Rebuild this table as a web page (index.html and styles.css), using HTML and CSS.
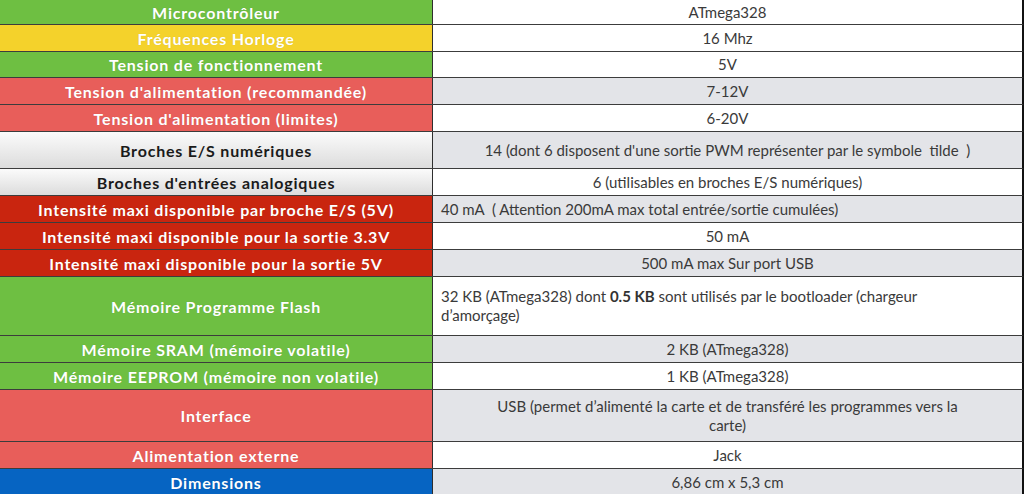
FILE: index.html
```html
<!DOCTYPE html>
<html lang="fr">
<head>
<meta charset="utf-8">
<title>Caractéristiques Arduino Uno</title>
<link rel="stylesheet" href="styles.css">
</head>
<body>
<div class="spec">
  <div class="row h25"><div class="key green"><span>Microcontrôleur</span></div><div class="val"><span>ATmega328</span></div></div>
  <div class="row"><div class="key yellow"><span>Fréquences Horloge</span></div><div class="val"><span>16 Mhz</span></div></div>
  <div class="row h26"><div class="key green"><span>Tension de fonctionnement</span></div><div class="val"><span>5V</span></div></div>
  <div class="row"><div class="key red"><span>Tension d'alimentation (recommandée)</span></div><div class="val alt"><span>7-12V</span></div></div>
  <div class="row"><div class="key red"><span>Tension d'alimentation (limites)</span></div><div class="val"><span>6-20V</span></div></div>
  <div class="row h37"><div class="key light"><span>Broches E/S numériques</span></div><div class="val alt"><span>14 (dont 6 disposent d'une sortie PWM représenter par le symbole&nbsp; tilde&nbsp; )</span></div></div>
  <div class="row"><div class="key light"><span>Broches d'entrées analogiques</span></div><div class="val"><span>6 (utilisables en broches E/S numériques)</span></div></div>
  <div class="row"><div class="key dark"><span>Intensité maxi disponible par broche E/S (5V)</span></div><div class="val alt left"><span>40 mA&nbsp; ( Attention 200mA max total entrée/sortie cumulées)</span></div></div>
  <div class="row"><div class="key dark"><span>Intensité maxi disponible pour la sortie 3.3V</span></div><div class="val"><span>50 mA</span></div></div>
  <div class="row"><div class="key dark"><span>Intensité maxi disponible pour la sortie 5V</span></div><div class="val alt"><span>500 mA max Sur port USB</span></div></div>
  <div class="row h59"><div class="key green"><span>Mémoire Programme Flash</span></div><div class="val left wrap"><p class="para"><span>32 KB (ATmega328) dont </span><b>0.5 KB</b><span> sont utilisés par le bootloader (chargeur</span><br><span>d’amorçage)</span></p></div></div>
  <div class="row"><div class="key green"><span>Mémoire SRAM (mémoire volatile)</span></div><div class="val alt"><span>2 KB (ATmega328)</span></div></div>
  <div class="row"><div class="key green"><span>Mémoire EEPROM (mémoire non volatile)</span></div><div class="val"><span>1 KB (ATmega328)</span></div></div>
  <div class="row h52"><div class="key red"><span>Interface</span></div><div class="val alt"><p class="para">USB (permet d’alimenté la carte et de transféré les programmes vers la carte)</p></div></div>
  <div class="row"><div class="key red"><span>Alimentation externe</span></div><div class="val"><span>Jack</span></div></div>
  <div class="row"><div class="key blue"><span>Dimensions</span></div><div class="val alt"><span>6,86 cm x 5,3 cm</span></div></div>
</div>
</body>
</html>
```

FILE: styles.css
```css
html, body {
  margin: 0;
  padding: 0;
  background: #ffffff;
  overflow: hidden;
}

.spec {
  width: 1024px;
  font-family: Lato, "Open Sans", sans-serif;
  font-size: 15px;
}

.row {
  display: grid;
  grid-template-columns: 433px 1fr;
  height: 27px;
  box-sizing: border-box;
  border-bottom: 1px solid #3c3c3c;
  border-right: 2px solid #111;
}

.row.h25 { height: 25px; }
.row.h26 { height: 26px; }
.row.h37 { height: 37px; }
.row.h52 { height: 52px; }
.row.h59 { height: 59px; }

.key {
  display: flex;
  align-items: center;
  justify-content: center;
  text-align: center;
  font-size: 16px;
  font-weight: bold;
  letter-spacing: 0.8px;
  color: #ffffff;
  border-right: 1px solid #2e2e2e;
  text-shadow: 0 0 1px rgba(0,0,0,0.15);
}

.green { background: #6ebf42; }
.yellow { background: #f4d22b; }
.red { background: #e85e5a; }
.dark { background: #c9250f; }
.blue { background: #0664c2; }
.light {
  background: linear-gradient(#fbfbfb, #dcdcdc);
  color: #1a1a1a;
  text-shadow: none;
}

.val {
  display: flex;
  align-items: center;
  justify-content: center;
  text-align: center;
  color: #3a3a3a;
  background: #ffffff;
  padding: 0 50px;
  line-height: 19px;
}

.val.alt { background: #e3e4e8; }

.val.left {
  justify-content: flex-start;
  text-align: left;
  padding: 0 8px;
}

.val.left.wrap {
  padding: 0 80px 0 8px;
}

.para {
  margin: 0;
  line-height: 19px;
}

.val b {
  color: #333;
}
```
